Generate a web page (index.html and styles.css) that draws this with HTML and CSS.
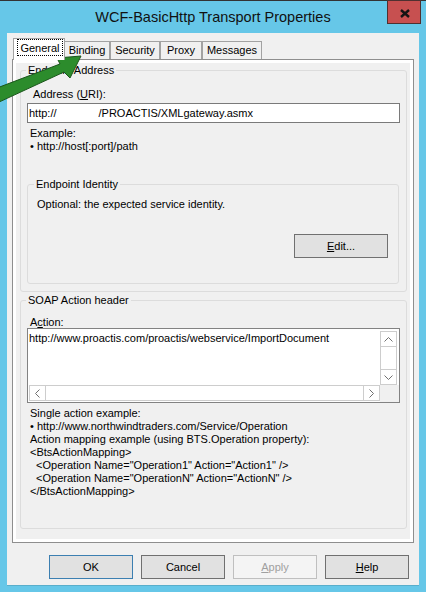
FILE: index.html
```html
<!DOCTYPE html>
<html>
<head>
<meta charset="utf-8">
<title>WCF-BasicHttp Transport Properties</title>
<link rel="stylesheet" href="styles.css">
</head>
<body>
<div class="window">
  <div class="titlebar">
    <div></div>
    <div class="title">WCF-BasicHttp Transport Properties</div>
    <div class="close-wrap">
      <button class="close" aria-label="Close">
        <svg width="10" height="9" viewBox="0 0 10 9"><path d="M1 1 L9 8 M9 1 L1 8" stroke="#141414" stroke-width="2.4" fill="none"/></svg>
      </button>
    </div>
  </div>
  <div class="client">
    <div class="tabs">
      <div class="tab selected t-general"><span class="focus">General</span></div>
      <div class="tab t-binding">Binding</div>
      <div class="tab t-security">Security</div>
      <div class="tab t-proxy">Proxy</div>
      <div class="tab t-messages">Messages</div>
    </div>
    <div class="panel">
      <div class="page">
        <fieldset class="group g-endpoint">
          <legend>Endpoint Address</legend>
          <div class="label indent">Address (<u>U</u>RI):</div>
          <div class="input">http://<span class="redact"></span>/PROACTIS/XMLgateway.asmx</div>
          <div class="hint">Example:<br>• http://host[:port]/path</div>
          <fieldset class="group g-identity">
            <legend>Endpoint Identity</legend>
            <div class="text">Optional: the expected service identity.</div>
            <div class="edit-row"><button class="btn edit"><u>E</u>dit...</button></div>
          </fieldset>
        </fieldset>
        <fieldset class="group g-soap">
          <legend>SOAP Action header</legend>
          <div class="label action">A<u>c</u>tion:</div>
          <div class="textarea">
            <div class="ta-text">http://www.proactis.com/proactis/webservice/ImportDocument</div>
            <div class="vsb">
              <div class="sb-btn up"><svg width="9" height="5" viewBox="0 0 9 5"><polyline points="0.5,4.5 4.5,0.5 8.5,4.5" fill="none" stroke="#707070"/></svg></div>
              <div class="sb-track"></div>
              <div class="sb-btn down"><svg width="9" height="5" viewBox="0 0 9 5"><polyline points="0.5,0.5 4.5,4.5 8.5,0.5" fill="none" stroke="#707070"/></svg></div>
            </div>
            <div class="hsb">
              <div class="sb-btn left"><svg width="5" height="9" viewBox="0 0 5 9"><polyline points="4.5,0.5 0.5,4.5 4.5,8.5" fill="none" stroke="#707070"/></svg></div>
              <div class="sb-track"></div>
              <div class="sb-btn right"><svg width="5" height="9" viewBox="0 0 5 9"><polyline points="0.5,0.5 4.5,4.5 0.5,8.5" fill="none" stroke="#707070"/></svg></div>
            </div>
            <div class="corner"></div>
          </div>
          <div class="example">Single action example:
• http://www.northwindtraders.com/Service/Operation
Action mapping example (using BTS.Operation property):
&lt;BtsActionMapping&gt;
  &lt;Operation Name="Operation1" Action="Action1" /&gt;
  &lt;Operation Name="OperationN" Action="ActionN" /&gt;
&lt;/BtsActionMapping&gt;</div>
        </fieldset>
      </div>
    </div>
    <div class="buttons">
      <button class="btn default">OK</button>
      <button class="btn">Cancel</button>
      <button class="btn disabled"><u>A</u>pply</button>
      <button class="btn"><u>H</u>elp</button>
    </div>
  </div>
</div>
<svg class="arrow" width="90" height="110" viewBox="0 0 90 110">
  <polygon points="-3,88 60,64 57,58 81,56 70,78 64,72 -3,103" fill="#2c8c2c" stroke="#1b561b" stroke-width="1" stroke-linejoin="round"/>
</svg>
</body>
</html>
```
FILE: styles.css
```css
* { box-sizing: border-box; }
html, body { margin: 0; padding: 0; }
body {
  width: 426px;
  height: 592px;
  overflow: hidden;
  position: relative;
  background: #66c7e8;
  font-family: "Liberation Sans", Arial, sans-serif;
  font-size: 11px;
  color: #000;
}
.window {
  height: 592px;
  display: flex;
  flex-direction: column;
  border-top: 1px solid #333;
}
.titlebar {
  height: 32px;
  flex: none;
  display: grid;
  grid-template-columns: 1fr auto 1fr;
}
.title {
  font-size: 14.5px;
  line-height: 32px;
  color: #111;
  white-space: nowrap;
}
.close-wrap {
  display: flex;
  justify-content: flex-end;
  align-items: flex-start;
}
.close {
  width: 34px;
  height: 24px;
  margin: -1px 5px 0 0;
  padding: 2px 0 0 1px;
  background: #c75050;
  border: 1px solid #4f3030;
  display: flex;
  align-items: center;
  justify-content: center;
}
.close svg { display: block; }
.client {
  flex: none;
  height: 552px;
  margin: 0 7px;
  padding-top: 5px;
  background: #f0f0f0;
  box-shadow: 0 1px 0 rgba(0, 0, 0, 0.12);
}
.tabs {
  display: flex;
  align-items: flex-end;
  height: 21px;
  margin-left: 5px;
  padding-left: 1px;
}
.tab {
  height: 18px;
  border: 1px solid #a2a2a2;
  border-bottom: none;
  background: #f0f0f0;
  text-align: center;
  line-height: 13px;
  padding-top: 2px;
  white-space: nowrap;
}
.tab.selected {
  height: 22px;
  margin-bottom: -1px;
  background: #fff;
  position: relative;
  z-index: 1;
  padding: 0 1px 0 3px;
}
.focus {
  display: block;
  height: 17px;
  border: 1px dotted #000;
  padding-top: 2px;
  line-height: 13px;
}
.t-general { width: 52px; }
.t-binding { width: 46px; margin-left: -1px; }
.t-security { width: 50px; }
.t-proxy { width: 42px; }
.t-messages { width: 60px; }
.panel {
  margin-left: 5px;
  width: 402px;
  height: 484px;
  border: 1px solid #8e8e8e;
  background: #fff;
  padding: 3px;
}
.page {
  height: 476px;
  background: #f0f0f0;
  overflow: hidden;
}
.group {
  margin: 0 3px 0 4px;
  padding: 11px 6px 7px 6px;
  border: 1px solid #dcdcdc;
  border-radius: 3px;
  min-width: 0;
}
.group legend {
  padding: 0 2px;
  margin-left: -1px;
  line-height: 14px;
}
.label { line-height: 13px; }
.indent { margin-left: 6px; }
.input {
  margin-top: 2px;
  height: 20px;
  border: 1px solid #7a7a7a;
  background: #fff;
  padding-left: 1px;
  line-height: 18px;
  white-space: nowrap;
}
.redact { display: inline-block; width: 42px; }
.hint {
  margin: 4px 0 0 3px;
  line-height: 13px;
}
.g-identity {
  margin: 24px 1px 0 0;
  padding: 7px 10px 25px 9px;
}
.g-identity legend { margin-left: -3px; }
.text { line-height: 13px; }
.edit-row {
  margin-top: 23px;
  display: flex;
  justify-content: flex-end;
}
.g-soap {
  margin-top: 1px;
  padding: 9px 6px 30px 6px;
}
.action {
  margin-left: 3px;
  line-height: 12px;
}
.textarea {
  height: 75px;
  border: 1px solid #828282;
  background: #fff;
  display: grid;
  grid-template-columns: 351px 17px;
  grid-template-rows: 54px 16px;
  padding: 2px 2px 1px 1px;
}
.ta-text {
  line-height: 13px;
  padding-top: 1px;
  white-space: nowrap;
  overflow: hidden;
}
.vsb {
  border: 1px solid #cdcdcd;
  display: flex;
  flex-direction: column;
}
.hsb {
  border: 1px solid #cdcdcd;
  display: flex;
}
.sb-btn {
  display: flex;
  align-items: center;
  justify-content: center;
}
.sb-btn svg { display: block; }
.sb-track { flex: 1; }
.vsb .up { height: 15px; border-bottom: 1px solid #cdcdcd; }
.vsb .down { height: 15px; border-top: 1px solid #cdcdcd; }
.hsb .left { width: 16px; border-right: 1px solid #cdcdcd; }
.hsb .right { width: 16px; border-left: 1px solid #cdcdcd; }
.corner {
  background: #f0f0f0;
  margin: 0 -2px -1px 0;
}
.example {
  margin: 4px 0 0 3px;
  line-height: 13px;
  white-space: pre;
}
.btn {
  width: 84px;
  height: 24px;
  border: 1px solid #707070;
  background: #e1e1e1;
  font: inherit;
  color: #000;
  padding: 0;
  line-height: 22px;
  text-align: center;
  border-radius: 0;
}
.btn.edit { width: 94px; }
.btn.default { border-color: #3c7fb1; }
.btn.disabled {
  border-color: #bfbfbf;
  background: #f4f4f4;
  color: #a0a0a0;
}
.buttons {
  display: flex;
  justify-content: flex-end;
  gap: 8px;
  margin-top: 12px;
  padding-right: 10px;
}
.arrow {
  position: absolute;
  left: 0;
  top: 0;
  pointer-events: none;
}
```
